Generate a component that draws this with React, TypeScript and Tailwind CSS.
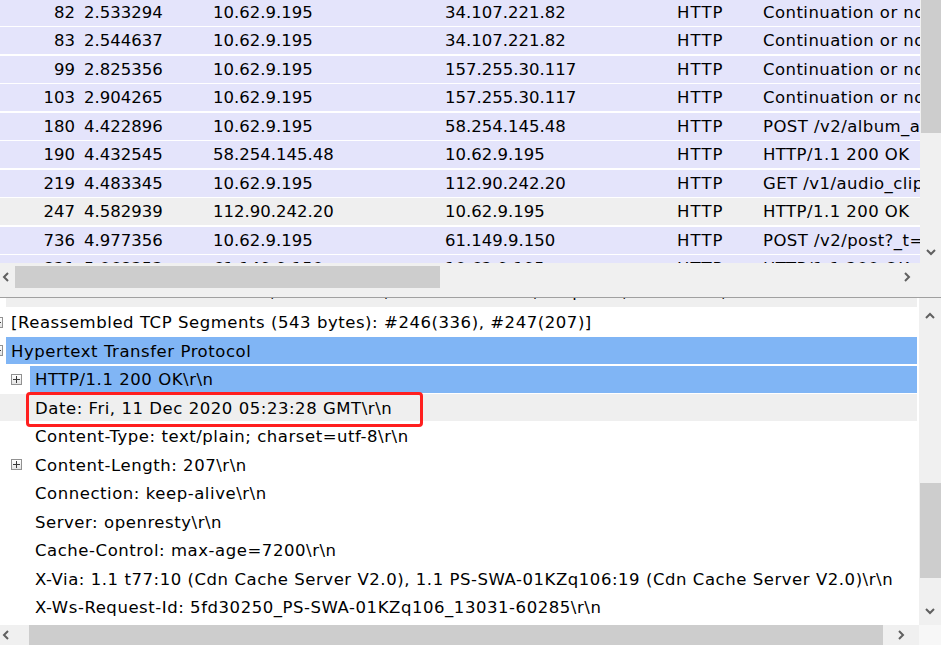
import React from "react";

type Packet = { no: string; time: string; src: string; dst: string; proto: string; info: string; sel?: boolean };

const packets: Packet[] = [
  { no: "82", time: "2.533294", src: "10.62.9.195", dst: "34.107.221.82", proto: "HTTP", info: "Continuation or non-HTTP traffic" },
  { no: "83", time: "2.544637", src: "10.62.9.195", dst: "34.107.221.82", proto: "HTTP", info: "Continuation or non-HTTP traffic" },
  { no: "99", time: "2.825356", src: "10.62.9.195", dst: "157.255.30.117", proto: "HTTP", info: "Continuation or non-HTTP traffic" },
  { no: "103", time: "2.904265", src: "10.62.9.195", dst: "157.255.30.117", proto: "HTTP", info: "Continuation or non-HTTP traffic" },
  { no: "180", time: "4.422896", src: "10.62.9.195", dst: "58.254.145.48", proto: "HTTP", info: "POST /v2/album_add HTTP/1.1" },
  { no: "190", time: "4.432545", src: "58.254.145.48", dst: "10.62.9.195", proto: "HTTP", info: "HTTP/1.1 200 OK" },
  { no: "219", time: "4.483345", src: "10.62.9.195", dst: "112.90.242.20", proto: "HTTP", info: "GET /v1/audio_clip HTTP/1.1" },
  { no: "247", time: "4.582939", src: "112.90.242.20", dst: "10.62.9.195", proto: "HTTP", info: "HTTP/1.1 200 OK", sel: true },
  { no: "736", time: "4.977356", src: "10.62.9.195", dst: "61.149.9.150", proto: "HTTP", info: "POST /v2/post?_t=1607664208" },
  { no: "821", time: "5.068353", src: "61.149.9.150", dst: "10.62.9.195", proto: "HTTP", info: "HTTP/1.1 200 OK" },
];

function Chevron({ dir }: { dir: "up" | "down" | "left" | "right" }) {
  const pts = {
    up: "1,7 5,3 9,7",
    down: "1,3 5,7 9,3",
    left: "7,1 3,5 7,9",
    right: "3,1 7,5 3,9",
  }[dir];
  return (
    <svg width="10" height="10" viewBox="0 0 10 10" className="block">
      <polyline points={pts} fill="none" stroke="#606060" strokeWidth="2" />
    </svg>
  );
}

function PlusBox() {
  return (
    <span className="flex h-[11px] w-[11px] items-center justify-center border border-[#919191] bg-gradient-to-b from-white to-[#e4e4e4]">
      <svg width="7" height="7" viewBox="0 0 7 7" className="block">
        <path d="M0 3.5h7M3.5 0v7" stroke="#3a3a3a" strokeWidth="1" />
      </svg>
    </span>
  );
}

function PacketRow({ p }: { p: Packet }) {
  return (
    <div
      className={`grid h-[27px] shrink-0 grid-cols-[75px_138px_232px_232px_86px_1fr] items-center whitespace-nowrap pt-[2px] ${
        p.sel ? "bg-[#efefef]" : "bg-[#e4e4fb]"
      }`}
    >
      <span className="text-right">{p.no}</span>
      <span className="pl-[9px]">{p.time}</span>
      <span>{p.src}</span>
      <span>{p.dst}</span>
      <span className="tracking-[1.1px]">{p.proto}</span>
      <span className="tracking-[0.45px]">{p.info}</span>
    </div>
  );
}

const headers = [
  "Content-Type: text/plain; charset=utf-8\\r\\n",
  "+Content-Length: 207\\r\\n",
  "Connection: keep-alive\\r\\n",
  "Server: openresty\\r\\n",
  "Cache-Control: max-age=7200\\r\\n",
  "X-Via: 1.1 t77:10 (Cdn Cache Server V2.0), 1.1 PS-SWA-01KZq106:19 (Cdn Cache Server V2.0)\\r\\n",
  "X-Ws-Request-Id: 5fd30250_PS-SWA-01KZq106_13031-60285\\r\\n",
];

export default function App() {
  return (
    <div className="relative flex h-[645px] w-[941px] flex-col overflow-hidden bg-white font-['DejaVu_Sans',sans-serif] text-[16.5px] leading-none text-black">
      {/* packet list */}
      <div className="flex h-[263px] shrink-0">
        <div className="w-[920px] overflow-hidden">
          <div className="-mt-[1.5px] flex flex-col gap-[1.5px]">
            {packets.map((p) => (
              <PacketRow key={p.no} p={p} />
            ))}
          </div>
        </div>
        <div className="flex w-[21px] flex-col bg-[#f0f0f0]">
          <div className="ml-[1px] h-[133px] bg-[#cdcdcd]" />
          <div className="flex-1" />
          <div className="flex h-[22px] items-center justify-center">
            <Chevron dir="down" />
          </div>
        </div>
      </div>

      {/* horizontal scrollbar of packet list */}
      <div className="flex h-[35px] shrink-0 items-start border-b border-[#a0a0a0] bg-[#f0f0f0] pt-[3px]">
        <div className="-ml-[3px] flex h-[22px] w-[18px] items-center justify-center">
          <Chevron dir="left" />
        </div>
        <div className="h-[22px] w-[425px] bg-[#cdcdcd]" />
        <div className="flex-1" />
        <div className="mr-[29px] flex h-[22px] w-[10px] items-center">
          <Chevron dir="right" />
        </div>
      </div>

      {/* packet details */}
      <div className="flex h-[327px] shrink-0">
        <div className="w-[919px] overflow-hidden">
          <div className="-mt-[18px] flex flex-col gap-[1.5px] whitespace-nowrap tracking-[0.55px]">
            <div className="ml-[6px] mr-[2px] flex h-[27px] shrink-0 items-center bg-[#efefef] pb-[3px] pl-[5px]">
              Transmission Control Protocol, Src Port: 80, Dst Port: 52134, Seq: 337, Ack: 1052, Len: 207
            </div>
            <div className="flex h-[27px] shrink-0 items-center">
              <span className="-ml-[8px] mr-[8px]">
                <PlusBox />
              </span>
              <span className="pt-[3px]">[Reassembled TCP Segments (543 bytes): #246(336), #247(207)]</span>
            </div>
            <div className="flex h-[27px] shrink-0 items-center">
              <span className="-ml-[8px] mr-[3px]">
                <PlusBox />
              </span>
              <div className="mr-[2px] flex h-full flex-1 items-center bg-[#80b5f5] pl-[5px] pt-[3px]">
                Hypertext Transfer Protocol
              </div>
            </div>
            <div className="flex h-[27px] shrink-0 items-center">
              <span className="ml-[11px] mr-[8px]">
                <PlusBox />
              </span>
              <div className="mr-[2px] flex h-full flex-1 items-center bg-[#80b5f5] pl-[5px] pt-[3px]">
                HTTP/1.1 200 OK\r\n
              </div>
            </div>
            <div className="mr-[2px] flex h-[27px] shrink-0 items-center bg-[#efefef] pl-[35px] pt-[3px]">
              Date: Fri, 11 Dec 2020 05:23:28 GMT\r\n
            </div>
            {headers.map((h) => {
              const exp = h.startsWith("+");
              return (
                <div key={h} className="flex h-[27px] shrink-0 items-center">
                  {exp ? (
                    <span className="ml-[11px] mr-[13px]">
                      <PlusBox />
                    </span>
                  ) : (
                    <span className="w-[35px] shrink-0" />
                  )}
                  <span className="pt-[3px]">{exp ? h.slice(1) : h}</span>
                </div>
              );
            })}
          </div>
        </div>
        <div className="flex w-[22px] flex-col bg-[#f0f0f0]">
          <div className="flex h-[34px] items-center justify-center pt-[2px]">
            <Chevron dir="up" />
          </div>
          <div className="h-[151px]" />
          <div className="ml-[1px] h-[95px] bg-[#cdcdcd]" />
          <div className="flex-1" />
          <div className="flex h-[26px] items-center justify-center pb-[2px]">
            <Chevron dir="down" />
          </div>
        </div>
      </div>

      {/* bottom horizontal scrollbar */}
      <div className="flex h-[20px] shrink-0 bg-[#f0f0f0]">
        <div className="flex w-[29px] items-center pl-[1px]">
          <Chevron dir="left" />
        </div>
        <div className="h-full w-[854px] bg-[#cdcdcd]" />
        <div className="flex w-[36px] items-center justify-center">
          <Chevron dir="right" />
        </div>
        <div className="flex-1 bg-[#f7f7f7]" />
      </div>

      {/* annotation */}
      <div className="pointer-events-none absolute left-[26px] top-[392px] h-[35px] w-[397px] rounded-[4px] border-[3px] border-[#ff1f1f]" />
    </div>
  );
}
